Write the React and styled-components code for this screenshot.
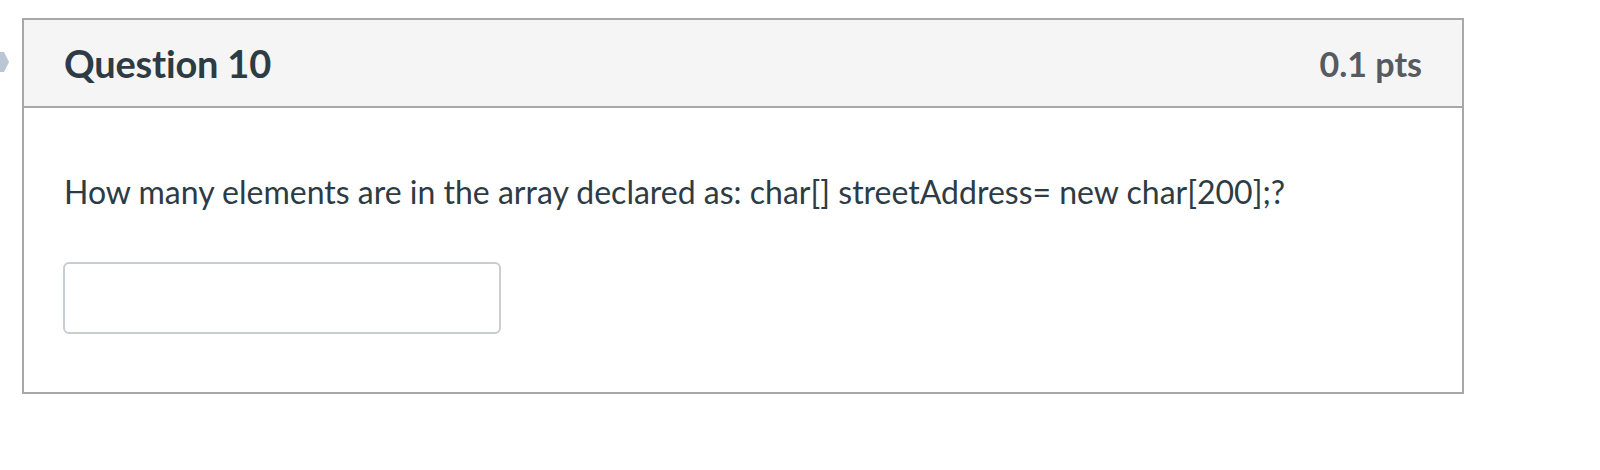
import React from "react";
import styled, { createGlobalStyle } from "styled-components";

const Global = createGlobalStyle`
  html, body { margin: 0; padding: 0; background: #fff; }
  body { font-family: Lato, "Open Sans", sans-serif; }
`;

const Page = styled.div`
  position: relative;
  width: 1600px;
  height: 470px;
  padding: 18px 0 0 22px;
  box-sizing: border-box;
`;

const Flag = styled.svg`
  position: absolute;
  left: 0;
  top: 50px;
`;

const Card = styled.section`
  width: 1442px;
  box-sizing: border-box;
  border: 2px solid #a8a8a8;
  background: #fff;
`;

const Header = styled.header`
  display: flex;
  justify-content: space-between;
  align-items: center;
  height: 86px;
  padding: 0 40px 0 40px;
  background: #f5f5f5;
  border-bottom: 2px solid #a8a8a8;
`;

const Title = styled.h2`
  margin: 0;
  font-size: 38px;
  font-weight: 700;
  color: #2d3b45;
  letter-spacing: -0.2px;
`;

const Points = styled.div`
  font-size: 34px;
  font-weight: 700;
  color: #555b60;
`;

const Body = styled.div`
  padding: 64px 40px 58px 40px;
`;

const QuestionText = styled.p`
  margin: 0 0 50px 0;
  font-size: 32px;
  line-height: 40px;
  color: #2d3b45;
`;

const Answer = styled.input`
  display: block;
  width: 438px;
  height: 72px;
  box-sizing: border-box;
  border: 2px solid #c7cdd1;
  border-radius: 6px;
  background: #fff;
  outline: none;
  margin: 0 0 0 -1px;
`;

export default function App() {
  return (
    <>
      <Global />
      <Page>
        <Flag width="10" height="24" viewBox="0 0 10 24">
          <path d="M0 2 L4 2 L9 12 L4 22 L0 22 Z" fill="#b9c6d3" />
        </Flag>
        <Card>
          <Header>
            <Title>Question 10</Title>
            <Points>0.1 pts</Points>
          </Header>
          <Body>
            <QuestionText>
              How many elements are in the array declared as: char[] streetAddress= new char[200];?
            </QuestionText>
            <Answer type="text" aria-label="Answer" />
          </Body>
        </Card>
      </Page>
    </>
  );
}
